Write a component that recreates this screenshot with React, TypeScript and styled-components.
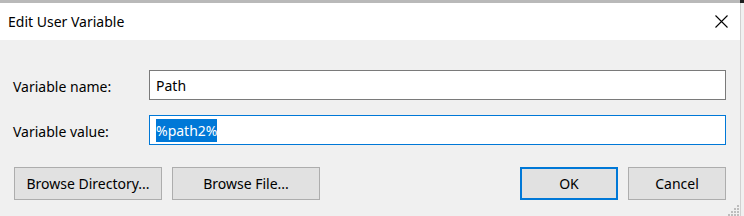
import React from "react";
import styled, { createGlobalStyle } from "styled-components";

const Global = createGlobalStyle`
  html, body { margin: 0; padding: 0; background: #f0f0f0; }
  body { width: 744px; height: 216px; overflow: hidden; font-family: "Noto Sans", "Open Sans", sans-serif; }
`;

const Screen = styled.div`
  width: 744px;
  height: 216px;
  display: flex;
  flex-direction: column;
  overflow: hidden;
  position: relative;
`;

const Behind = styled.div`
  height: 3px;
  flex: none;
  background: linear-gradient(to right, #b9b9b9 0, #b9b9b9 740px, #1e1e1e 740px);
`;

const Dialog = styled.div`
  flex: 1;
  display: flex;
  flex-direction: column;
  background: #f0f0f0;
  border-right: 1px solid #d0d0d0;
  margin-right: 3px;
`;

const TitleBar = styled.div`
  height: 37px;
  flex: none;
  background: #ffffff;
  display: flex;
  align-items: center;
  justify-content: space-between;
  padding: 0 12px 0 8px;
`;

const Title = styled.span`
  font-size: 14px;
  color: #000;
`;

const CloseIcon = styled.svg`
  width: 13px;
  height: 13px;
  display: block;
`;

const Body = styled.div`
  padding: 30px 14px 0 13px;
  display: flex;
  flex-direction: column;
`;

const Form = styled.div`
  display: grid;
  grid-template-columns: 136px 1fr;
  row-gap: 15px;
  align-items: center;
`;

const Label = styled.label`
  font-size: 14px;
  color: #000;
  padding-top: 2px;
`;

const Field = styled.div<{ $focused?: boolean }>`
  height: 30px;
  box-sizing: border-box;
  border: 1px solid ${(p) => (p.$focused ? "#0078d7" : "#7a7a7a")};
  background: #fff;
  display: flex;
  align-items: center;
  padding-left: 6px;
  font-size: 14px;
  color: #000;
`;

const Selected = styled.span`
  background: #0078d7;
  color: #fff;
  padding: 2px 0 2px;
`;

const Buttons = styled.div`
  margin-top: 22px;
  display: flex;
  gap: 10px;
  padding-left: 1px;
`;

const Spacer = styled.div`
  flex: 1;
`;

const Button = styled.button<{ $w: number; $default?: boolean }>`
  width: ${(p) => p.$w}px;
  height: 33px;
  box-sizing: border-box;
  background: #e1e1e1;
  border: ${(p) => (p.$default ? "2px solid #0078d7" : "1px solid #adadad")};
  font-family: inherit;
  font-size: 14px;
  color: #000;
  padding: 0;
  margin: 0;
`;

const Grip = styled.svg`
  position: absolute;
  right: 4px;
  bottom: 0px;
  width: 12px;
  height: 12px;
`;

export default function App() {
  const dots: Array<[number, number]> = [
    [9, 1],
    [6, 4],
    [9, 4],
    [3, 7],
    [6, 7],
    [9, 7],
    [0, 10],
    [3, 10],
    [6, 10],
    [9, 10],
  ];
  return (
    <Screen>
      <Global />
      <Behind />
      <Dialog>
        <TitleBar>
          <Title>Edit User Variable</Title>
          <CloseIcon viewBox="0 0 13 13">
            <path d="M0.5 0.5 L12.5 12.5 M12.5 0.5 L0.5 12.5" stroke="#000" strokeWidth="1.1" fill="none" />
          </CloseIcon>
        </TitleBar>
        <Body>
          <Form>
            <Label>Variable name:</Label>
            <Field>Path</Field>
            <Label>Variable value:</Label>
            <Field $focused>
              <Selected>%path2%</Selected>
            </Field>
          </Form>
          <Buttons>
            <Button $w={148}>Browse Directory...</Button>
            <Button $w={148}>Browse File...</Button>
            <Spacer />
            <Button $w={98} $default>
              OK
            </Button>
            <Button $w={98}>Cancel</Button>
          </Buttons>
        </Body>
      </Dialog>
      <Grip viewBox="0 0 12 12">
        {dots.map(([x, y], i) => (
          <rect key={i} x={x} y={y} width={2} height={2} fill="#bdbdbd" />
        ))}
      </Grip>
    </Screen>
  );
}
